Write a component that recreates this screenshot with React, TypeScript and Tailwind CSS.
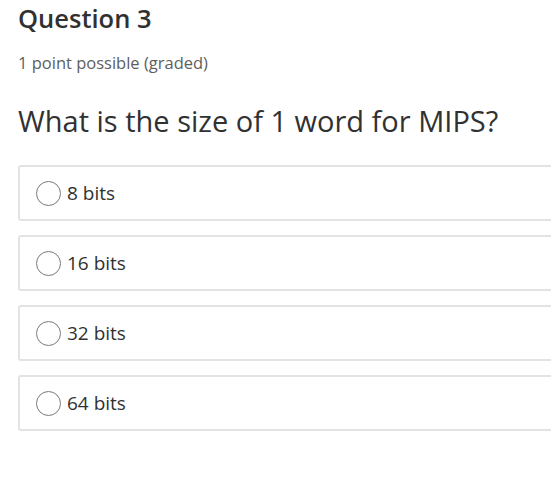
import React from "react";

const options = ["8 bits", "16 bits", "32 bits", "64 bits"];

export default function App() {
  return (
    <div className="w-[551px] h-[492px] overflow-hidden bg-white text-[#313131] pl-[18px] pt-[3px]" style={{ fontFamily: '"Open Sans", "Noto Sans", sans-serif' }}>
      <h2 className="text-[25.5px] font-semibold leading-[30px] text-[#313131]">Question 3</h2>
      <div className="mt-[20px] text-[16.5px] leading-[20px] text-[#5e5e5e]">1 point possible (graded)</div>
      <p className="mt-[28px] text-[29px] leading-[40px] text-[#313131]">What is the size of 1 word for MIPS?</p>
      <div className="mt-[24px] flex flex-col gap-[14px]">
        {options.map((o) => (
          <label key={o} className="w-[560px] h-[56px] border-2 border-[#e3e3e3] rounded-[3px] flex items-center pl-[16px]">
            <span className="w-[25px] h-[25px] rounded-full border-[1.5px] border-[#7a7a7a] bg-white shrink-0" />
            <span className="ml-[6px] text-[19px] leading-[24px] text-[#313131]">{o}</span>
          </label>
        ))}
      </div>
    </div>
  );
}
